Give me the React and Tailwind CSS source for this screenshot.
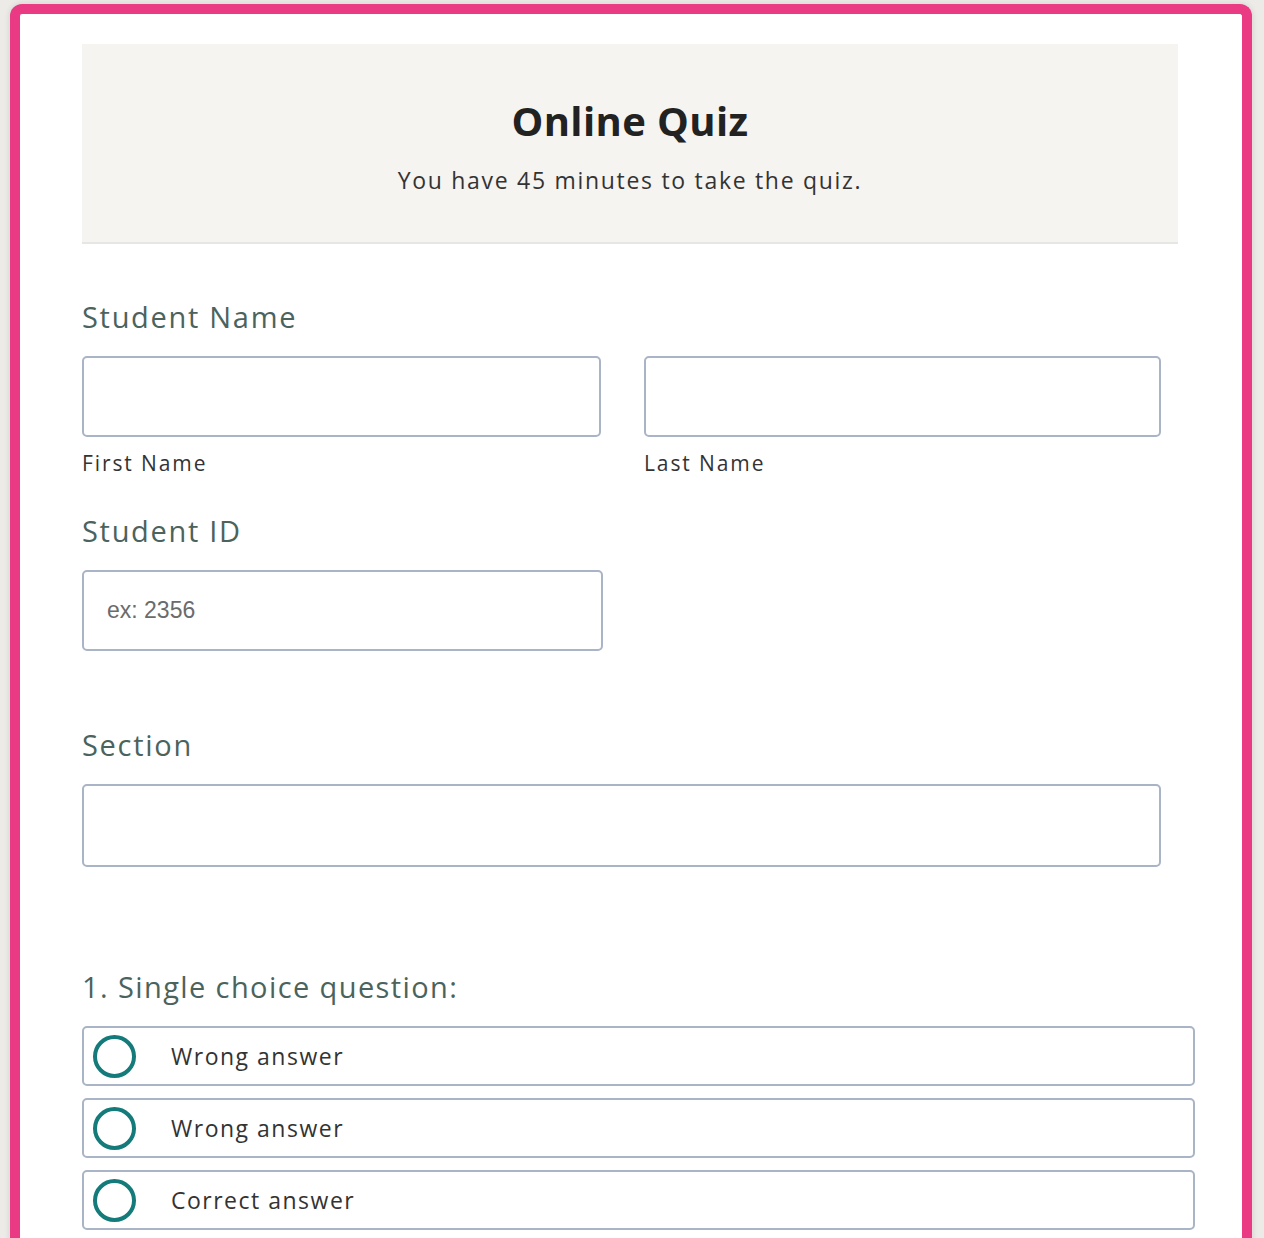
import React from 'react';

const options = ['Wrong answer', 'Wrong answer', 'Correct answer'];

function Label({ children, className = '', tight = false }) {
  return (
    <div
      className={`text-[29px] leading-[40px] text-[#4b635c] ${tight ? 'tracking-[1.4px]' : 'tracking-[1.7px]'} ${className}`}
    >
      {children}
    </div>
  );
}

function TextBox({ className = '', placeholder }) {
  return (
    <input
      type="text"
      placeholder={placeholder}
      className={`block h-[81px] rounded-[5px] border-2 border-[#a9b4c7] bg-white px-[23px] text-[23px] text-[#333] placeholder:text-[#6b6b6b] outline-none ${className}`}
      style={{ fontFamily: '"Liberation Sans", Arial, sans-serif' }}
    />
  );
}

export default function App() {
  return (
    <div
      className="h-[1238px] overflow-hidden bg-[#edebe7] pt-[4px] pl-[10px] pr-[12px]"
      style={{ fontFamily: '"Open Sans", Lato, sans-serif' }}
    >
      <div className="h-[1300px] rounded-t-[12px] border-[10px] border-b-0 border-[#ea3a84] bg-white pt-[30px] pl-[62px] shadow-[0_0_6px_rgba(0,0,0,0.12)]">
        {/* Header */}
        <div className="flex h-[200px] w-[1096px] flex-col items-center border-b-2 border-[#e6e6e4] bg-[#f5f4f1] pt-[52px]">
          <h1 className="text-[40px] font-bold leading-[50px] tracking-[0.4px] text-[#222]">Online Quiz</h1>
          <p className="mt-[19px] text-[23px] leading-[30px] tracking-[1.7px] text-[#333]">You have 45 minutes to take the quiz.</p>
        </div>

        {/* Student name */}
        <Label className="mt-[53px]">Student Name</Label>
        <div className="mt-[19px] flex gap-[43px]">
          <div>
            <TextBox className="w-[519px]" />
            <div className="mt-[12px] text-[21px] leading-[28px] tracking-[1.9px] text-[#333]">First Name</div>
          </div>
          <div>
            <TextBox className="w-[517px]" />
            <div className="mt-[12px] text-[21px] leading-[28px] tracking-[1.9px] text-[#333]">Last Name</div>
          </div>
        </div>

        {/* Student ID */}
        <Label className="mt-[34px]">Student ID</Label>
        <TextBox className="mt-[19px] w-[521px]" placeholder="ex: 2356" />

        {/* Section */}
        <Label className="mt-[74px]">Section</Label>
        <TextBox className="mt-[19px] h-[83px] w-[1079px]" />

        {/* Question */}
        <Label className="mt-[100px]" tight>1. Single choice question:</Label>
        <div className="mt-[19px] flex w-[1113px] flex-col gap-[12px]">
          {options.map((opt, i) => (
            <label
              key={i}
              className="flex h-[60px] cursor-pointer items-center rounded-[5px] border-2 border-[#a9b4c7] pl-[9px]"
            >
              <span className="block h-[43px] w-[43px] rounded-full border-[4px] border-[#147b7a]" />
              <span className="ml-[35px] text-[23px] tracking-[1.5px] text-[#333]">{opt}</span>
            </label>
          ))}
        </div>
      </div>
    </div>
  );
}
